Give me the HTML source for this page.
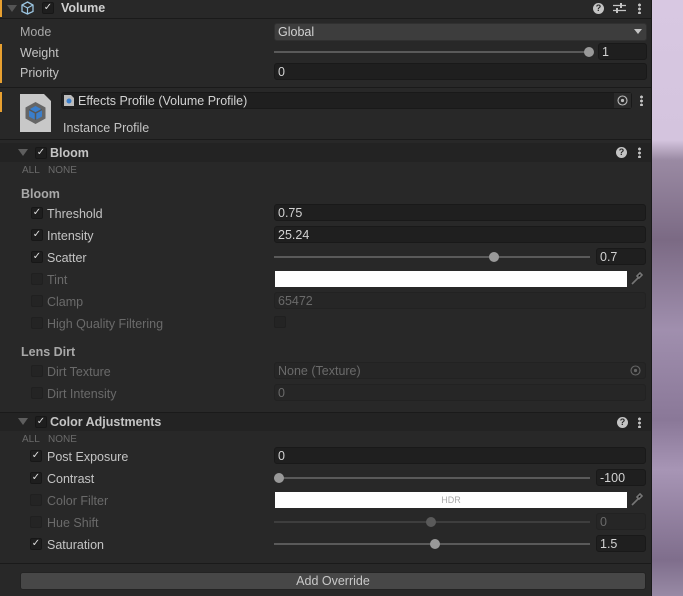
<!DOCTYPE html>
<html><head><meta charset="utf-8"><style>
*{margin:0;padding:0;box-sizing:border-box}
body{width:683px;height:596px;overflow:hidden;background:#282828;font-family:"Liberation Sans",sans-serif;font-size:12.5px;color:#c4c4c4;position:relative}
.a{position:absolute}
.lbl{position:absolute;line-height:14px;white-space:nowrap;margin-top:1px}
.dis{color:#6a6a6a}
.b{font-weight:bold}
.fld{position:absolute;height:17px;background:#1f1f1f;border:1px solid #191919;border-radius:3px;padding-left:3px;line-height:16px;color:#d2d2d2;white-space:nowrap;overflow:hidden}
.fld.d{background:#262626;border-color:#222;color:#6a6a6a}
.cb{position:absolute;width:12px;height:12px;background:#1e1e1e;border:1px solid #171717;border-radius:2px;color:#ddd;font-size:10px;line-height:10px;text-align:center}
.cb.d{background:#242424;border-color:#202020}
.sep{position:absolute;left:0;width:652px;height:1px;background:#1a1a1a}
.track{position:absolute;height:2px;background:#5a5a5a}
.track.d{background:#3e3e3e}
.knob{position:absolute;width:10px;height:10px;border-radius:5px;background:#999}
.knob.d{background:#5a5a5a}
.or{position:absolute;left:0;width:2px;background:#e8a030}
.tri{position:absolute;width:0;height:0;border-left:5px solid transparent;border-right:5px solid transparent;border-top:7px solid #5e5e5e}
.help{position:absolute;width:11px;height:11px;border-radius:6px;background:#c4c4c4;color:#282828;font-size:9px;font-weight:bold;line-height:11px;text-align:center}
.dots{position:absolute;width:3px;height:11px;background:radial-gradient(circle,#c4c4c4 1.3px,transparent 1.6px) 0 0/3px 4px repeat-y}
.small{font-size:10px;color:#6a6a6a}
</style></head><body>
<div class="a" style="left:652px;top:0;width:31px;height:596px;background:linear-gradient(180deg,#d8c8e2 0,#d4c4de 140px,#9a8aa3 160px,#7b6a84 240px,#a08fae 330px,#8a7898 420px,#a795b5 470px,#7f6e8c 560px,#988aa5 596px)"></div>
<div class="a" style="left:651px;top:0;width:1px;height:596px;background:#1a1a1a"></div>

<div class="or" style="top:0;height:17px"></div>
<div class="tri" style="left:7px;top:5px;border-top-color:#555"></div>
<svg class="a" style="left:21px;top:1px" width="13" height="14" viewBox="0 0 13 14"><path d="M6.5 1L12 4v6.5L6.5 13 1 10.5V4z" fill="none" stroke="#9cc6e2" stroke-width="1.3"/><path d="M1 4l5.5 3L12 4M6.5 7v6" fill="none" stroke="#9cc6e2" stroke-width="1.2"/></svg>
<div class="cb" style="left:42px;top:2px">✓</div>
<div class="lbl b" style="left:61px;top:0px;color:#d0d0d0">Volume</div>
<div class="help" style="left:593px;top:3px">?</div>
<svg class="a" style="left:613px;top:2px" width="13" height="12" viewBox="0 0 13 12"><path d="M0 3.5h13M0 8.5h13" stroke="#c4c4c4" stroke-width="1.3"/><path d="M8 1v5M4 6v5" stroke="#c4c4c4" stroke-width="2"/></svg>
<div class="dots" style="left:638px;top:3px"></div>
<div class="sep" style="top:18px"></div>

<div class="lbl" style="left:20px;top:24px;color:#a8a8a8">Mode</div>
<div class="a" style="left:274px;top:23px;width:373px;height:18px;background:#3d3d3d;border:1px solid #303030;border-radius:3px;padding-left:3px;line-height:17px;color:#d2d2d2">Global</div>
<div class="tri" style="left:634px;top:29px;border-top-color:#c4c4c4;border-left-width:4px;border-right-width:4px;border-top-width:5px"></div>

<div class="or" style="top:44px;height:39px"></div>
<div class="lbl" style="left:20px;top:45px">Weight</div>
<div class="track" style="left:274px;top:51px;width:316px"></div>
<div class="knob" style="left:584px;top:47px"></div>
<div class="fld" style="left:598px;top:43px;width:49px">1</div>
<div class="lbl" style="left:20px;top:65px">Priority</div>
<div class="fld" style="left:274px;top:63px;width:373px">0</div>
<div class="sep" style="top:87px"></div>

<div class="or" style="top:92px;height:20px"></div>
<svg class="a" style="left:20px;top:94px" width="31" height="38" viewBox="0 0 31 38"><path d="M0 0h24l7 7v31H0z" fill="#c8c8c8"/><path d="M15.5 8l10 5.5v11l-10 5.5-10-5.5v-11z" fill="#666"/><path d="M15.5 12l6.5 3.5v7l-6.5 3.5-6.5-3.5v-7z" fill="#3a7ecb"/><path d="M9 15.5l6.5 3.5 6.5-3.5M15.5 19v7" stroke="#555" stroke-width="1.5" fill="none"/></svg>
<div class="fld" style="left:61px;top:92px;width:571px;padding-left:16px;color:#d2d2d2">Effects Profile (Volume Profile)</div>
<svg class="a" style="left:64px;top:95px" width="10" height="11" viewBox="0 0 10 11"><path d="M0 0h7l3 3v8H0z" fill="#bbb"/><circle cx="5" cy="6" r="2.5" fill="#3a7ecb"/></svg>
<div class="a" style="left:614px;top:93px;width:17px;height:15px;background:#2a2a2a"></div>
<svg class="a" style="left:617px;top:95px" width="11" height="11"><circle cx="5.5" cy="5.5" r="4.5" fill="none" stroke="#bbb" stroke-width="1.1"/><circle cx="5.5" cy="5.5" r="1.6" fill="#bbb"/></svg>
<div class="dots" style="left:640px;top:95px"></div>
<div class="lbl" style="left:63px;top:120px">Instance Profile</div>
<div class="sep" style="top:139px"></div>

<div class="a" style="left:0;top:143px;width:651px;height:19px;background:#232323"></div>
<div class="tri" style="left:18px;top:149px"></div>
<div class="cb" style="left:35px;top:147px">✓</div>
<div class="lbl b" style="left:50px;top:145px">Bloom</div>
<div class="help" style="left:616px;top:147px">?</div>
<div class="dots" style="left:638px;top:147px"></div>
<div class="lbl small" style="left:22px;top:163px">ALL</div>
<div class="lbl small" style="left:48px;top:163px">NONE</div>

<div class="lbl b" style="left:21px;top:186px;color:#a8a8a8">Bloom</div>
<div class="cb" style="left:31px;top:207px">✓</div><div class="lbl" style="left:47px;top:206px">Threshold</div>
<div class="fld" style="left:274px;top:204px;width:372px">0.75</div>
<div class="cb" style="left:31px;top:229px">✓</div><div class="lbl" style="left:47px;top:228px">Intensity</div>
<div class="fld" style="left:274px;top:226px;width:372px">25.24</div>
<div class="cb" style="left:31px;top:251px">✓</div><div class="lbl" style="left:47px;top:250px">Scatter</div>
<div class="track" style="left:274px;top:256px;width:316px"></div>
<div class="knob" style="left:489px;top:252px"></div>
<div class="fld" style="left:596px;top:248px;width:50px">0.7</div>
<div class="cb d" style="left:31px;top:273px"></div><div class="lbl dis" style="left:47px;top:272px">Tint</div>
<div class="a" style="left:275px;top:271px;width:352px;height:16px;background:#fff"></div>
<svg class="a" style="left:631px;top:272px" width="12" height="13" viewBox="0 0 12 13"><path d="M1 12l6-6M9 1l2 2-3 3-2-2z" stroke="#777" stroke-width="1.6"/></svg>
<div class="cb d" style="left:31px;top:295px"></div><div class="lbl dis" style="left:47px;top:294px">Clamp</div>
<div class="fld d" style="left:274px;top:292px;width:372px">65472</div>
<div class="cb d" style="left:31px;top:317px"></div><div class="lbl dis" style="left:47px;top:316px">High Quality Filtering</div>
<div class="cb d" style="left:274px;top:316px"></div>

<div class="lbl b" style="left:21px;top:344px;color:#a8a8a8">Lens Dirt</div>
<div class="cb d" style="left:31px;top:365px"></div><div class="lbl dis" style="left:47px;top:364px">Dirt Texture</div>
<div class="fld d" style="left:274px;top:362px;width:372px">None (Texture)</div>
<svg class="a" style="left:630px;top:365px" width="11" height="11"><circle cx="5.5" cy="5.5" r="4.5" fill="none" stroke="#666" stroke-width="1.1"/><circle cx="5.5" cy="5.5" r="1.6" fill="#666"/></svg>
<div class="cb d" style="left:31px;top:387px"></div><div class="lbl dis" style="left:47px;top:386px">Dirt Intensity</div>
<div class="fld d" style="left:274px;top:384px;width:372px">0</div>
<div class="sep" style="top:412px"></div>

<div class="a" style="left:0;top:413px;width:651px;height:18px;background:#232323"></div>
<div class="tri" style="left:18px;top:418px"></div>
<div class="cb" style="left:35px;top:416px">✓</div>
<div class="lbl b" style="left:50px;top:414px">Color Adjustments</div>
<div class="help" style="left:617px;top:417px">?</div>
<div class="dots" style="left:638px;top:417px"></div>
<div class="lbl small" style="left:22px;top:432px">ALL</div>
<div class="lbl small" style="left:48px;top:432px">NONE</div>

<div class="cb" style="left:30px;top:450px">✓</div><div class="lbl" style="left:47px;top:449px">Post Exposure</div>
<div class="fld" style="left:274px;top:447px;width:372px">0</div>
<div class="cb" style="left:30px;top:472px">✓</div><div class="lbl" style="left:47px;top:471px">Contrast</div>
<div class="track" style="left:274px;top:477px;width:316px"></div>
<div class="knob" style="left:274px;top:473px"></div>
<div class="fld" style="left:596px;top:469px;width:50px">-100</div>
<div class="cb d" style="left:30px;top:494px"></div><div class="lbl dis" style="left:47px;top:493px">Color Filter</div>
<div class="a" style="left:275px;top:492px;width:352px;height:16px;background:#fff;color:#aaa;font-size:9px;text-align:center;line-height:16px">HDR</div>
<svg class="a" style="left:631px;top:493px" width="12" height="13" viewBox="0 0 12 13"><path d="M1 12l6-6M9 1l2 2-3 3-2-2z" stroke="#777" stroke-width="1.6"/></svg>
<div class="cb d" style="left:30px;top:516px"></div><div class="lbl dis" style="left:47px;top:515px">Hue Shift</div>
<div class="track d" style="left:274px;top:521px;width:316px"></div>
<div class="knob d" style="left:426px;top:517px"></div>
<div class="fld d" style="left:596px;top:513px;width:50px">0</div>
<div class="cb" style="left:30px;top:538px">✓</div><div class="lbl" style="left:47px;top:537px">Saturation</div>
<div class="track" style="left:274px;top:543px;width:316px"></div>
<div class="knob" style="left:430px;top:539px"></div>
<div class="fld" style="left:596px;top:535px;width:50px">1.5</div>
<div class="sep" style="top:563px"></div>

<div class="a" style="left:20px;top:572px;width:626px;height:18px;background:#474747;border:1px solid #232323;border-radius:3px;text-align:center;line-height:17px;color:#c8c8c8">Add Override</div>
</body></html>
